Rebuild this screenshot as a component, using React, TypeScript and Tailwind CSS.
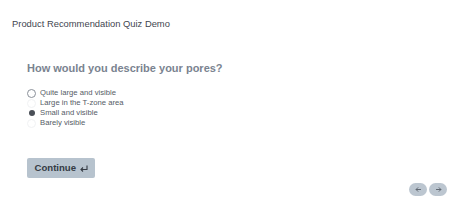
import { useState } from 'react';

const options = [
  'Quite large and visible',
  'Large in the T-zone area',
  'Small and visible',
  'Barely visible',
];

export default function App() {
  const [selected, setSelected] = useState(2);

  return (
    <div className="w-[474px] h-[213px] bg-white relative font-['Liberation_Sans',Arial,sans-serif] overflow-hidden">
      <div className="pt-[18px] pl-[12px] text-[9.4px] leading-[12px] text-[#3f4650]">Product Recommendation Quiz Demo</div>

      <div className="pl-[27px] pt-[31px]">
        <h1 className="text-[11px] font-bold text-[#7a8390] leading-[14px]">How would you describe your pores?</h1>

        <div className="mt-[13px] flex flex-col">
          {options.map((opt, i) => (
            <label key={opt} className="flex items-center h-[10px] gap-[4px] text-[7.7px] text-[#555c66] cursor-pointer">
              <span
                className={
                  'w-[9px] h-[9px] rounded-full flex items-center justify-center ' +
                  (i === 0 ? 'border border-[#8a9099]' : i === 2 ? '' : 'border border-[#f1f2f4]')
                }
                onClick={() => setSelected(i)}
              >
                {selected === i && <span className="w-[6px] h-[6px] rounded-full bg-[#4a4f57]" />}
              </span>
              <span>{opt}</span>
            </label>
          ))}
        </div>

        <button className="mt-[30px] h-[20px] pl-[7.5px] pr-[7px] rounded-[2px] bg-[#b7c3ce] text-[9.6px] font-bold text-[#353b44] flex items-center gap-[4px]">
          Continue
          <svg width="8" height="7" viewBox="0 0 8 7" fill="none" stroke="#353b44" strokeWidth="1.1">
            <path d="M7 0.5V4.5H1M3 2.5L1 4.5L3 6.5" />
          </svg>
        </button>
      </div>

      <div className="absolute right-[27px] bottom-[17px] flex gap-[2px]">
        <button className="w-[18px] h-[13px] rounded-full bg-[#bcc6d0] flex items-center justify-center">
          <svg width="7" height="7" viewBox="0 0 10 10" fill="none" stroke="#5d6570" strokeWidth="1.4">
            <path d="M8.5 5H1.5M4.5 2L1.5 5L4.5 8" />
          </svg>
        </button>
        <button className="w-[18px] h-[13px] rounded-full bg-[#bcc6d0] flex items-center justify-center">
          <svg width="7" height="7" viewBox="0 0 10 10" fill="none" stroke="#5d6570" strokeWidth="1.4">
            <path d="M1.5 5H8.5M5.5 2L8.5 5L5.5 8" />
          </svg>
        </button>
      </div>
    </div>
  );
}
